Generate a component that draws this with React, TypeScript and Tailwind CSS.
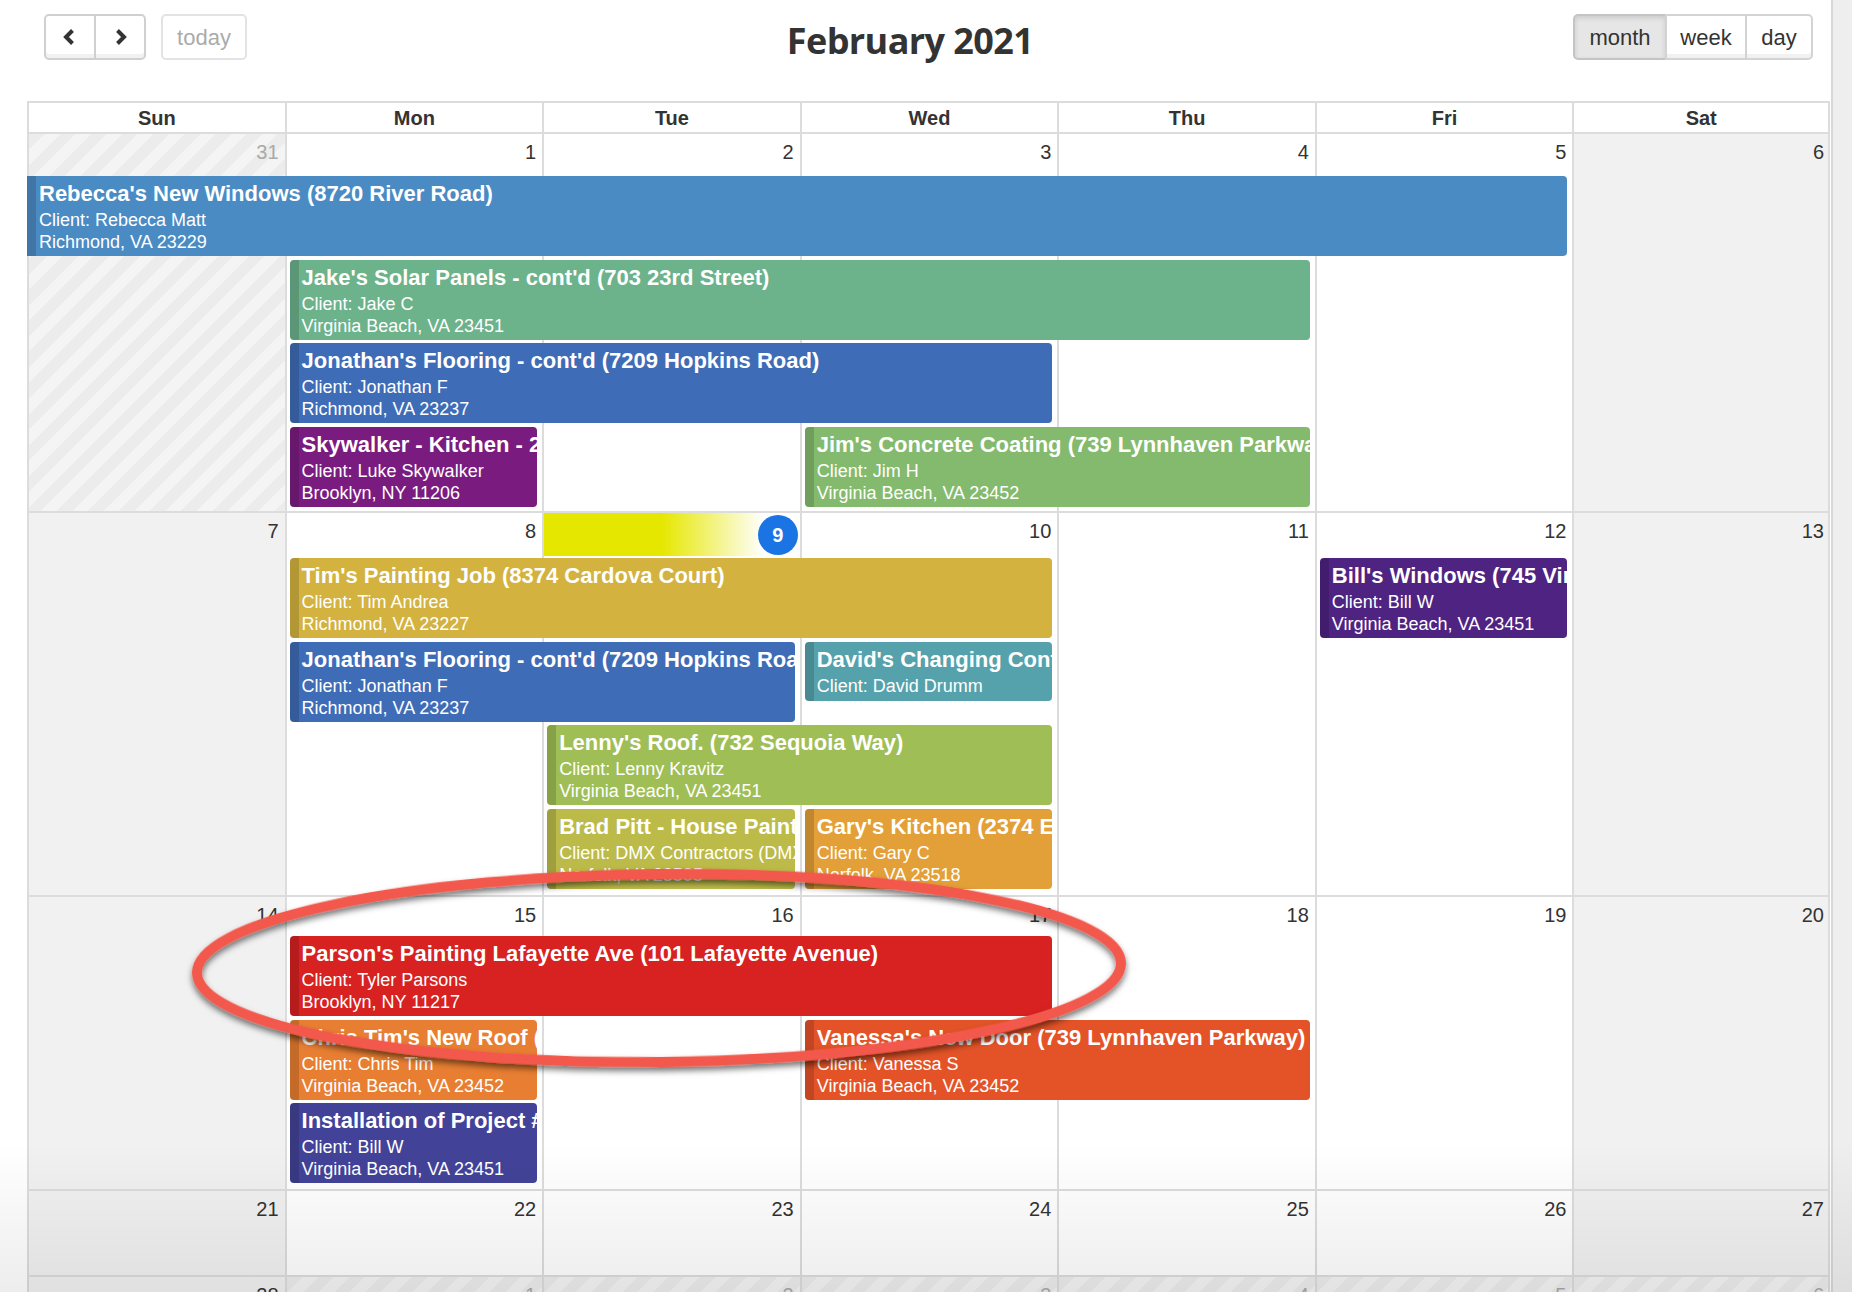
import React from "react";

type CalEvent = {
  pos: string;
  bg: string;
  title: string;
  client?: string;
  addr?: string;
};

type Day = { n: number; bg?: string; dim?: boolean; today?: boolean };

type Week = {
  h: string;
  rows: string;
  days: Day[];
  events: CalEvent[];
};

const COLS = ["col-start-1", "col-start-2", "col-start-3", "col-start-4", "col-start-5", "col-start-6", "col-start-7"];

const WEEKEND = "bg-[#f1f1f1]";
const STRIPES =
  "bg-[repeating-linear-gradient(135deg,#ececed_0px,#ececed_11px,#f4f4f5_11px,#f4f4f5_22px)]";

const weeks: Week[] = [
  {
    h: "h-[379px]",
    rows: "grid-rows-[42px_83.6px_83.6px_83.6px_1fr]",
    days: [
      { n: 31, bg: STRIPES, dim: true },
      { n: 1 },
      { n: 2 },
      { n: 3 },
      { n: 4 },
      { n: 5 },
      { n: 6, bg: WEEKEND },
    ],
    events: [
      {
        pos: "col-start-1 col-span-6 row-start-2 !ml-0 !rounded-l-none",
        bg: "bg-[#4a8bc4]",
        title: "Rebecca's New Windows (8720 River Road)",
        client: "Client: Rebecca Matt",
        addr: "Richmond, VA 23229",
      },
      {
        pos: "col-start-2 col-span-4 row-start-3",
        bg: "bg-[#6cb28b]",
        title: "Jake's Solar Panels - cont'd (703 23rd Street)",
        client: "Client: Jake C",
        addr: "Virginia Beach, VA 23451",
      },
      {
        pos: "col-start-2 col-span-3 row-start-4",
        bg: "bg-[#3f6cb6]",
        title: "Jonathan's Flooring - cont'd (7209 Hopkins Road)",
        client: "Client: Jonathan F",
        addr: "Richmond, VA 23237",
      },
      {
        pos: "col-start-2 col-span-1 row-start-5",
        bg: "bg-[#7a1c7f]",
        title: "Skywalker - Kitchen - 2 (418 Dean Street)",
        client: "Client: Luke Skywalker",
        addr: "Brooklyn, NY 11206",
      },
      {
        pos: "col-start-4 col-span-2 row-start-5",
        bg: "bg-[#84ba6d]",
        title: "Jim's Concrete Coating (739 Lynnhaven Parkway)",
        client: "Client: Jim H",
        addr: "Virginia Beach, VA 23452",
      },
    ],
  },
  {
    h: "h-[384px]",
    rows: "grid-rows-[45px_83.6px_83.6px_83.6px_1fr]",
    days: [
      { n: 7, bg: WEEKEND },
      { n: 8 },
      { n: 9, today: true },
      { n: 10 },
      { n: 11 },
      { n: 12 },
      { n: 13, bg: WEEKEND },
    ],
    events: [
      {
        pos: "col-start-2 col-span-3 row-start-2",
        bg: "bg-[#d3b23f]",
        title: "Tim's Painting Job (8374 Cardova Court)",
        client: "Client: Tim Andrea",
        addr: "Richmond, VA 23227",
      },
      {
        pos: "col-start-6 col-span-1 row-start-2",
        bg: "bg-[#4e2382]",
        title: "Bill's Windows (745 Virginia Beach Blvd)",
        client: "Client: Bill W",
        addr: "Virginia Beach, VA 23451",
      },
      {
        pos: "col-start-2 col-span-2 row-start-3",
        bg: "bg-[#3f6cb6]",
        title: "Jonathan's Flooring - cont'd (7209 Hopkins Road)",
        client: "Client: Jonathan F",
        addr: "Richmond, VA 23237",
      },
      {
        pos: "col-start-4 col-span-1 row-start-3 !h-[59px]",
        bg: "bg-[#56a2ac]",
        title: "David's Changing Contract (512 Atlantic Ave)",
        client: "Client: David Drumm",
      },
      {
        pos: "col-start-3 col-span-2 row-start-4",
        bg: "bg-[#9fbe56]",
        title: "Lenny's Roof. (732 Sequoia Way)",
        client: "Client: Lenny Kravitz",
        addr: "Virginia Beach, VA 23451",
      },
      {
        pos: "col-start-3 col-span-1 row-start-5",
        bg: "bg-[#bcbb49]",
        title: "Brad Pitt - House Painting (DMX)",
        client: "Client: DMX Contractors (DMX)",
        addr: "Norfolk, VA 23505",
      },
      {
        pos: "col-start-4 col-span-1 row-start-5",
        bg: "bg-[#e39f38]",
        title: "Gary's Kitchen (2374 E Ocean View Ave)",
        client: "Client: Gary C",
        addr: "Norfolk, VA 23518",
      },
    ],
  },
  {
    h: "h-[294px]",
    rows: "grid-rows-[39px_83.6px_83.6px_1fr]",
    days: [
      { n: 14, bg: WEEKEND },
      { n: 15 },
      { n: 16 },
      { n: 17 },
      { n: 18 },
      { n: 19 },
      { n: 20, bg: WEEKEND },
    ],
    events: [
      {
        pos: "col-start-2 col-span-3 row-start-2",
        bg: "bg-[#d82121]",
        title: "Parson's Painting Lafayette Ave (101 Lafayette Avenue)",
        client: "Client: Tyler Parsons",
        addr: "Brooklyn, NY 11217",
      },
      {
        pos: "col-start-2 col-span-1 row-start-3",
        bg: "bg-[#e87e32]",
        title: "Chris Tim's New Roof (412 Shore Drive)",
        client: "Client: Chris Tim",
        addr: "Virginia Beach, VA 23452",
      },
      {
        pos: "col-start-4 col-span-2 row-start-3",
        bg: "bg-[#e35327]",
        title: "Vanessa's New Door (739 Lynnhaven Parkway)",
        client: "Client: Vanessa S",
        addr: "Virginia Beach, VA 23452",
      },
      {
        pos: "col-start-2 col-span-1 row-start-4",
        bg: "bg-[#424398]",
        title: "Installation of Project #1042",
        client: "Client: Bill W",
        addr: "Virginia Beach, VA 23451",
      },
    ],
  },
  {
    h: "h-[86px]",
    rows: "grid-rows-[42px_1fr]",
    days: [
      { n: 21, bg: WEEKEND },
      { n: 22 },
      { n: 23 },
      { n: 24 },
      { n: 25 },
      { n: 26 },
      { n: 27, bg: WEEKEND },
    ],
    events: [],
  },
  {
    h: "h-[86px]",
    rows: "grid-rows-[42px_1fr]",
    days: [
      { n: 28, bg: WEEKEND },
      { n: 1, bg: STRIPES, dim: true },
      { n: 2, bg: STRIPES, dim: true },
      { n: 3, bg: STRIPES, dim: true },
      { n: 4, bg: STRIPES, dim: true },
      { n: 5, bg: STRIPES, dim: true },
      { n: 6, bg: STRIPES, dim: true },
    ],
    events: [],
  },
];

function Chevron({ dir }: { dir: "left" | "right" }) {
  return (
    <svg width="20" height="20" viewBox="0 0 20 20" fill="none">
      <path
        d={dir === "left" ? "M12.5 3.5 6 10l6.5 6.5" : "M7.5 3.5 14 10l-6.5 6.5"}
        stroke="#333"
        strokeWidth="4"
        strokeLinejoin="miter"
      />
    </svg>
  );
}

function Toolbar() {
  return (
    <div className="flex h-[101px] items-start justify-between pl-[44px] pr-[18px] pt-[14px]">
      <div className="flex items-center gap-[15px]">
        <div className="flex">
          <button className="flex h-[46px] w-[52px] items-center justify-center rounded-l-[5px] border-2 border-[#d0d0d0] bg-white shadow-[inset_0_-4px_0_#f1f1f1]">
            <Chevron dir="left" />
          </button>
          <button className="-ml-[2px] flex h-[46px] w-[52px] items-center justify-center rounded-r-[5px] border-2 border-[#d0d0d0] bg-white shadow-[inset_0_-4px_0_#f1f1f1]">
            <Chevron dir="right" />
          </button>
        </div>
        <button className="h-[46px] w-[86px] rounded-[5px] border-2 border-[#e3e3e3] bg-white text-[22px] text-[#ababab]">
          today
        </button>
      </div>
      <h2 className="mt-[1px] font-['Open_Sans',sans-serif] text-[36px] font-bold leading-[52px] tracking-[-0.6px] text-[#333]">
        February 2021
      </h2>
      <div className="flex text-[22px] text-[#333]">
        <button className="h-[46px] w-[94px] rounded-l-[5px] border-2 border-[#c4c4c4] bg-[#e6e6e6] shadow-[inset_0_2px_5px_rgba(0,0,0,0.12)]">
          month
        </button>
        <button className="-ml-[2px] h-[46px] w-[82px] border-2 border-[#d3d3d3] bg-white shadow-[inset_0_-4px_0_#f1f1f1]">
          week
        </button>
        <button className="-ml-[2px] h-[46px] w-[68px] rounded-r-[5px] border-2 border-[#d3d3d3] bg-white shadow-[inset_0_-4px_0_#f1f1f1]">
          day
        </button>
      </div>
    </div>
  );
}

function EventBar({ ev }: { ev: CalEvent }) {
  return (
    <div
      className={`${ev.pos} ${ev.bg} mx-[5px] h-[80px] self-start overflow-hidden whitespace-nowrap rounded-[4px] border-l-[9px] border-black/15 pl-[3px] pt-[5px] text-white`}
    >
      <div className="mb-[2px] text-[22px] font-bold leading-[26px]">{ev.title}</div>
      {ev.client && <div className="text-[18px] leading-[22px]">{ev.client}</div>}
      {ev.addr && <div className="text-[18px] leading-[22px]">{ev.addr}</div>}
    </div>
  );
}

function WeekRow({ week }: { week: Week }) {
  return (
    <div className={`${week.h} border-t-2 border-[#dcdcdc]`}>
      <div className={`grid h-full grid-cols-7 ${week.rows}`}>
        {week.days.map((d, i) => (
          <div
            key={"bg" + i}
            className={`${COLS[i]} row-span-full border-l-2 border-[#dcdcdc] ${i === 6 ? "border-r-2" : ""} ${d.bg ?? "bg-white"}`}
          />
        ))}
        {week.days.map((d, i) =>
          d.today ? (
            <div
              key={"n" + i}
              className={`${COLS[i]} row-start-1 ml-[2px] mb-[2px] flex items-center justify-end bg-[linear-gradient(to_right,#e6e700_0%,#e6e700_46%,#ffffff_86%)] pr-[2px]`}
            >
              <span className="flex h-[40px] w-[40px] items-center justify-center rounded-full bg-[#1b74e4] text-[20px] font-bold text-white">
                {d.n}
              </span>
            </div>
          ) : (
            <div
              key={"n" + i}
              className={`${COLS[i]} row-start-1 flex justify-end pr-[6px] pt-[6px] text-[20px] leading-[24px] ${d.dim ? "text-[#a9a9a9]" : "text-[#333]"}`}
            >
              {d.n}
            </div>
          )
        )}
        {week.events.map((ev, i) => (
          <EventBar key={"e" + i} ev={ev} />
        ))}
      </div>
    </div>
  );
}

function Calendar() {
  const names = ["Sun", "Mon", "Tue", "Wed", "Thu", "Fri", "Sat"];
  return (
    <div className="ml-[27px] w-[1803px]">
      <div className="grid grid-cols-7 border-t-2 border-[#dcdcdc]">
        {names.map((n, i) => (
          <div
            key={n}
            className={`h-[29px] border-l-2 border-[#dcdcdc] text-center text-[20px] font-bold leading-[30px] text-[#333] ${i === 6 ? "border-r-2" : ""}`}
          >
            {n}
          </div>
        ))}
      </div>
      {weeks.map((w, i) => (
        <WeekRow key={i} week={w} />
      ))}
    </div>
  );
}

function Annotation() {
  return (
    <svg className="pointer-events-none absolute left-0 top-0" width="1852" height="1292">
      <defs>
        <filter id="shadow" x="-10%" y="-30%" width="120%" height="160%">
          <feDropShadow dx="0" dy="4" stdDeviation="3" floodColor="#000" floodOpacity="0.55" />
        </filter>
      </defs>
      <ellipse
        cx="659"
        cy="968"
        rx="462"
        ry="94"
        transform="rotate(-0.6 659 968)"
        fill="none"
        stroke="#f2584c"
        strokeWidth="10"
        filter="url(#shadow)"
      />
    </svg>
  );
}

export default function App() {
  return (
    <div className="relative flex h-[1292px] w-[1852px] overflow-hidden bg-white font-['Liberation_Sans',Arial,Helvetica,sans-serif] text-[#333]">
      <div className="w-[1831px]">
        <Toolbar />
        <Calendar />
      </div>
      <div className="w-[21px] border-l-2 border-[#d8d8d8] bg-[#eeeeee]" />
      <div className="pointer-events-none absolute bottom-0 left-0 h-[150px] w-full bg-gradient-to-b from-transparent to-black/[0.07]" />
      <Annotation />
    </div>
  );
}
